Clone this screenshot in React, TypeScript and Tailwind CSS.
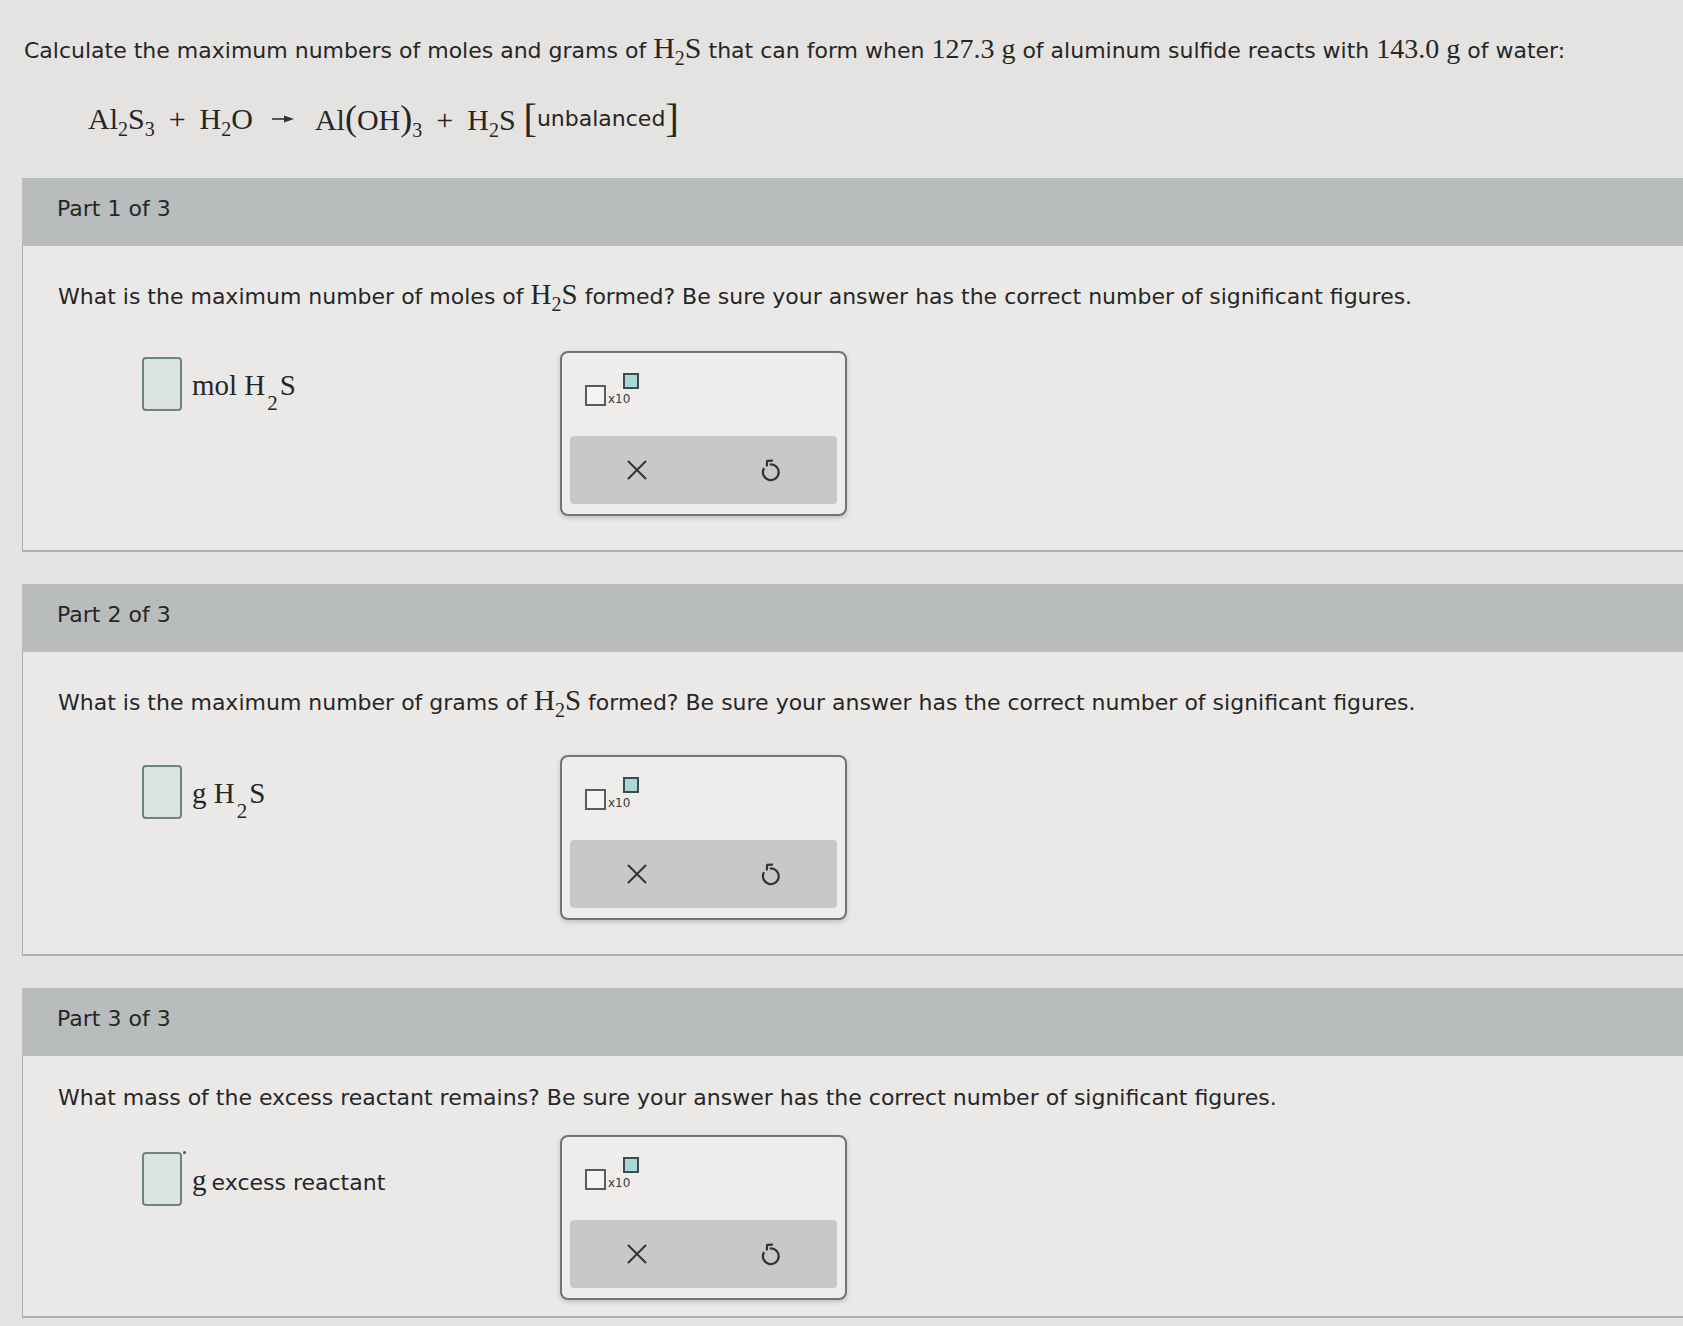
import type { ReactNode } from "react";

const sans = "font-['DejaVu_Sans','Verdana',sans-serif]";
const serif = "font-['Liberation_Serif','Times_New_Roman',serif]";

function M({ children, size = "text-[29px]" }: { children: ReactNode; size?: string }) {
  return <span className={`${serif} ${size}`}>{children}</span>;
}

function Sub({ children }: { children: ReactNode }) {
  return <span className="relative top-[7px] text-[20px] leading-none">{children}</span>;
}

// the answer field's unit has its subscript pushed well below the line, like ALEKS does
function LowSub({ children }: { children: ReactNode }) {
  return <span className="relative top-[15px] mx-[2px] text-[21px]">{children}</span>;
}

function Arrow() {
  return (
    <svg viewBox="0 0 24 10" className="ml-[18px] mr-[20px] inline-block h-[10px] w-[24px] align-middle" fill="#333">
      <path d="M1 5H15" stroke="#333" strokeWidth="1.6" />
      <path d="M13 1.5 23 5 13 8.5Z" />
    </svg>
  );
}

function XIcon() {
  return (
    <svg viewBox="0 0 24 24" className="h-[24px] w-[24px]" fill="none" stroke="#333" strokeWidth="2">
      <path d="M3.5 3.5 20.5 20.5M20.5 3.5 3.5 20.5" strokeLinecap="round" />
    </svg>
  );
}

function UndoIcon() {
  return (
    <svg viewBox="0 0 24 24" className="h-[27px] w-[27px]" fill="none" stroke="#333" strokeWidth="2" strokeLinecap="round" strokeLinejoin="round">
      <path d="M12.2 6.6a7 7 0 1 1-6.3 4.1" />
      <path d="M13.4 3.2 9 3.4 8.8 7.6" />
    </svg>
  );
}

function Tools() {
  return (
    <div className="h-[165px] w-[287px] shrink-0 rounded-[8px] border-2 border-[#737373] bg-[#eeedec] px-[8px] pt-[20px] shadow-[0_2px_5px_rgba(0,0,0,0.18)]">
      <div className="flex h-[33px] items-end pl-[15px]">
        <span className="h-[21px] w-[21px] border-2 border-[#5b5b5b] bg-[#f4f4f3]" />
        <span className={`${sans} mb-[1px] ml-[2px] text-[12px] leading-none text-[#3a3a3a]`}>x10</span>
        <span className="-ml-[7px] h-[16px] w-[16px] self-start border-2 border-[#3e4c4e] bg-[#a9d8da]" />
      </div>
      <div className="mt-[30px] grid h-[68px] grid-cols-2 rounded-[4px] bg-[#c7c9c9]">
        <div className="flex items-center justify-center">
          <XIcon />
        </div>
        <div className="flex items-center justify-center">
          <UndoIcon />
        </div>
      </div>
    </div>
  );
}

function Part({
  n,
  question,
  unit,
  bodyH,
  qTop,
  rowTop,
  inputTop,
  mark,
}: {
  n: number;
  question: ReactNode;
  unit: ReactNode;
  bodyH: string;
  qTop: string;
  rowTop: string;
  inputTop: string;
  mark?: boolean;
}) {
  return (
    <section>
      <div className={`${sans} flex h-[68px] items-center bg-[#b8bcbc] pb-[8px] pl-[35px] text-[22px] text-[#262626]`}>
        Part {n} of 3
      </div>
      <div className={`${bodyH} border-b-2 border-l border-[#aeb0b0] bg-[#ebe9e7]`}>
        <p className={`${sans} ${qTop} pl-[35px] text-[22px] leading-[30px] text-[#262626]`}>{question}</p>
        <div className={`${rowTop} flex pl-[119px]`}>
          <div className={`${inputTop} flex w-[418px] shrink-0 items-start`}>
            <div className="relative h-[54px] w-[40px] shrink-0 rounded-[4px] border-2 border-[#6e8482] bg-[#dce4e2]">
              {mark && <span className="absolute -right-[6px] -top-[3px] h-[3px] w-[3px] rounded-full bg-[#555]" />}
            </div>
            <div className="ml-[10px] mt-[11px] leading-[34px] text-[#262626]">{unit}</div>
          </div>
          <Tools />
        </div>
      </div>
    </section>
  );
}

export default function App() {
  return (
    <div className={`${sans} min-h-screen overflow-hidden bg-[#e5e3e1] text-[#262626]`}>
      <p className="pl-[24px] pt-[33px] text-[22px] leading-[30px]">
        Calculate the maximum numbers of moles and grams of{" "}
        <M size="text-[30px]">
          H<Sub>2</Sub>S
        </M>{" "}
        that can form when <M size="text-[28px]">127.3 g</M> of aluminum sulfide reacts with{" "}
        <M size="text-[28px]">143.0 g</M> of water:
      </p>

      <div className="mt-[32px] flex items-center pl-[88px] leading-[40px] text-[#262626]">
        <M size="text-[30px]">
          Al<Sub>2</Sub>S<Sub>3</Sub>
          <span className="mx-[14px]">+</span>H<Sub>2</Sub>O
        </M>
        <Arrow />
        <M size="text-[30px]">
          Al<span className="text-[36px]">(</span>OH<span className="text-[36px]">)</span>
          <Sub>3</Sub>
          <span className="mx-[14px]">+</span>H<Sub>2</Sub>S
        </M>
        <span className={`${serif} ml-[8px] text-[40px] font-light leading-none`}>[</span>
        <span className="text-[22px]">unbalanced</span>
        <span className={`${serif} text-[40px] font-light leading-none`}>]</span>
      </div>

      <div className="ml-[22px] mt-[38px] flex flex-col gap-[32px]">
        <Part
          n={1}
          bodyH="h-[306px]"
          qTop="pt-[33px]"
          rowTop="mt-[39px]"
          inputTop="mt-[6px]"
          question={
            <>
              What is the maximum number of moles of{" "}
              <M>
                H<Sub>2</Sub>S
              </M>{" "}
              formed? Be sure your answer has the correct number of significant figures.
            </>
          }
          unit={
            <M>
              mol H<LowSub>2</LowSub>S
            </M>
          }
        />
        <Part
          n={2}
          bodyH="h-[304px]"
          qTop="pt-[33px]"
          rowTop="mt-[37px]"
          inputTop="mt-[10px]"
          question={
            <>
              What is the maximum number of grams of{" "}
              <M>
                H<Sub>2</Sub>S
              </M>{" "}
              formed? Be sure your answer has the correct number of significant figures.
            </>
          }
          unit={
            <M>
              g H<LowSub>2</LowSub>S
            </M>
          }
        />
        <Part
          n={3}
          bodyH="h-[262px]"
          qTop="pt-[27px]"
          rowTop="mt-[22px]"
          inputTop="mt-[17px]"
          mark
          question={<>What mass of the excess reactant remains? Be sure your answer has the correct number of significant figures.</>}
          unit={
            <>
              <M>g</M> <span className="text-[22px]">excess reactant</span>
            </>
          }
        />
      </div>
    </div>
  );
}
